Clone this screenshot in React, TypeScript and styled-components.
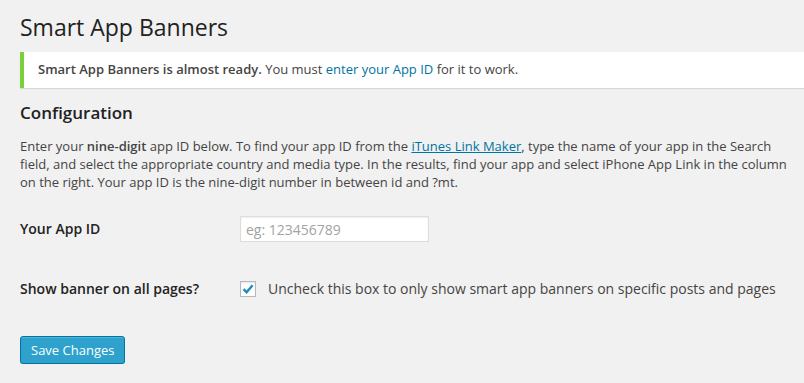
import styled, { createGlobalStyle } from "styled-components";

const GlobalStyle = createGlobalStyle`
  html, body {
    margin: 0;
    padding: 0;
    background: #f1f1f1;
  }
  body {
    font-family: "Open Sans", "Liberation Sans", sans-serif;
    font-size: 13px;
    color: #444;
  }
`;

const Wrap = styled.div`
  padding: 0 0 0 20px;
  overflow: hidden;
`;

const Title = styled.h1`
  margin: 0;
  padding: 13px 0 10px;
  font-size: 23px;
  font-weight: 400;
  line-height: 29px;
  color: #222;
`;

const Notice = styled.div`
  background: #fff;
  border-left: 4px solid #7ad03a;
  box-shadow: 0 1px 1px rgba(0, 0, 0, 0.1);
  padding: 7px 14px 9px;
  line-height: 20px;
  margin-bottom: 14px;

  strong {
    font-weight: 600;
    color: #444;
  }
`;

const Link = styled.a<{ $underline?: boolean }>`
  color: #0074a2;
  text-decoration: ${(p) => (p.$underline ? "underline" : "none")};
`;

const SectionTitle = styled.h2`
  margin: 0 0 13px;
  font-size: 17px;
  font-weight: 600;
  line-height: 22px;
  color: #222;
`;

const Description = styled.p`
  margin: 0 14px 0 0;
  line-height: 18px;

  strong {
    font-weight: 600;
  }
`;

const FormTable = styled.div`
  padding-top: 10px;
`;

const Row = styled.div`
  display: grid;
  grid-template-columns: 220px 1fr;
  align-items: center;
  padding: 15px 0 22px;
`;

const Label = styled.label`
  font-size: 14px;
  font-weight: 600;
  color: #222;
  line-height: 18px;
`;

const TextInput = styled.input`
  box-sizing: border-box;
  width: 189px;
  height: 26px;
  padding: 3px 5px;
  border: 1px solid #ddd;
  box-shadow: inset 0 1px 2px rgba(0, 0, 0, 0.07);
  background: #fff;
  font-family: inherit;
  font-size: 14px;
  color: #333;
  outline: none;

  &::placeholder {
    color: #a3a3a3;
  }
`;

const CheckLine = styled.div`
  display: flex;
  align-items: center;
  gap: 12px;
  font-size: 14px;
  line-height: 20px;
`;

const CheckBox = styled.span`
  box-sizing: border-box;
  width: 16px;
  height: 16px;
  border: 1px solid #b4b9be;
  background: #fff;
  box-shadow: inset 0 1px 2px rgba(0, 0, 0, 0.1);
  display: flex;
  align-items: center;
  justify-content: center;
  flex: none;
`;

const Submit = styled.div`
  margin-top: 15px;
`;

const Button = styled.button`
  height: 28px;
  padding: 0 10px 1px;
  line-height: 26px;
  font-family: inherit;
  font-size: 13px;
  color: #fff;
  background: #2ea2cc;
  border: 1px solid #0074a2;
  border-radius: 3px;
  box-shadow: inset 0 1px 0 rgba(120, 200, 230, 0.5),
    0 1px 0 rgba(0, 0, 0, 0.15);
  cursor: pointer;
`;

export default function App() {
  return (
    <>
      <GlobalStyle />
      <Wrap>
        <Title>Smart App Banners</Title>
        <Notice>
          <strong>Smart App Banners is almost ready.</strong> You must{" "}
          <Link href="#">enter your App ID</Link> for it to work.
        </Notice>
        <SectionTitle>Configuration</SectionTitle>
        <Description>
          Enter your <strong>nine-digit</strong> app ID below. To find your app
          ID from the{" "}
          <Link href="#" $underline>
            iTunes Link Maker
          </Link>
          , type the name of your app in the Search field, and select the
          appropriate country and media type. In the results, find your app and
          select iPhone App Link in the column on the right. Your app ID is the
          nine-digit number in between id and ?mt.
        </Description>
        <FormTable>
          <Row>
            <Label htmlFor="app-id">Your App ID</Label>
            <TextInput id="app-id" type="text" placeholder="eg: 123456789" />
          </Row>
          <Row>
            <Label>Show banner on all pages?</Label>
            <CheckLine>
              <CheckBox>
                <svg width="12" height="12" viewBox="0 0 12 12">
                  <path
                    d="M1.5 6.2 L4.6 9.2 L10.6 2.2"
                    fill="none"
                    stroke="#1e8cbe"
                    strokeWidth="2.4"
                  />
                </svg>
              </CheckBox>
              Uncheck this box to only show smart app banners on specific posts
              and pages
            </CheckLine>
          </Row>
        </FormTable>
        <Submit>
          <Button>Save Changes</Button>
        </Submit>
      </Wrap>
    </>
  );
}
